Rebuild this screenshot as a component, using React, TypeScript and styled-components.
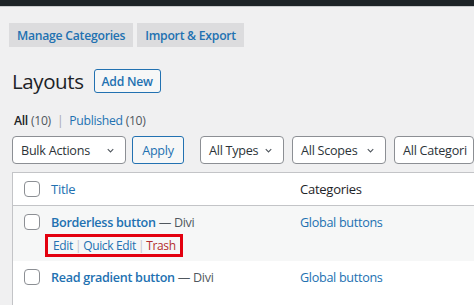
import React from "react";
import styled, { createGlobalStyle } from "styled-components";

const GlobalStyle = createGlobalStyle`
  html, body { margin: 0; padding: 0; }
  body {
    background: #f0f0f1;
    font-family: "Open Sans", "Noto Sans", sans-serif;
    color: #3c434a;
    overflow: hidden;
    width: 474px;
    height: 305px;
  }
`;

const AdminBar = styled.div`
  height: 6px;
  background: #1d2327;
  border-bottom: 1px solid #c9cbcd;
`;

const Page = styled.div`
  padding: 16px 0 0 12px;
  width: 472px;
  box-sizing: border-box;
`;

const Tabs = styled.div`
  display: flex;
  gap: 4px;
  margin-left: -3px;
`;

const Tab = styled.a`
  display: inline-flex;
  align-items: center;
  height: 24px;
  padding: 0 8px;
  background: #dcdcde;
  color: #2271b1;
  font-size: 12.2px;
  font-weight: 600;
  letter-spacing: -0.25px;
`;

const TitleRow = styled.div`
  display: flex;
  align-items: center;
  gap: 10px;
  margin-top: 22px;
`;

const Heading = styled.h1`
  margin: 0;
  font-size: 20.5px;
  line-height: 24px;
  font-weight: 400;
  color: #1d2327;
  letter-spacing: -0.4px;
`;

const OutlineButton = styled.a`
  display: inline-flex;
  align-items: center;
  height: 22px;
  padding: 0 7px;
  border: 1px solid #2271b1;
  border-radius: 3px;
  background: #f6f7f7;
  color: #2271b1;
  font-size: 12.2px;
  font-weight: 600;
  letter-spacing: -0.25px;
`;

const Views = styled.div`
  display: flex;
  align-items: center;
  margin-top: 19px;
  padding-left: 2px;
  font-size: 12.2px;
  letter-spacing: -0.3px;
  color: #50575e;
`;

const ViewLink = styled.span<{ $current?: boolean }>`
  color: ${(p) => (p.$current ? "#1d2327" : "#2271b1")};
  font-weight: ${(p) => (p.$current ? 600 : 400)};
`;

const Count = styled.span`
  color: #50575e;
  margin-left: 3px;
`;

const Sep = styled.span`
  color: #a7aaad;
  margin: 0 6px;
`;

const Filters = styled.div`
  display: flex;
  align-items: center;
  margin-top: 7px;
  white-space: nowrap;
`;

const Select = styled.div<{ $w: number; $gap?: number }>`
  display: flex;
  align-items: center;
  justify-content: space-between;
  flex: none;
  box-sizing: border-box;
  width: ${(p) => p.$w}px;
  height: 28px;
  margin-right: ${(p) => p.$gap ?? 0}px;
  padding: 0 9px 0 8px;
  border: 1px solid #8c8f94;
  border-radius: 4px;
  background: #fff;
  color: #2c3338;
  font-size: 12.6px;
  letter-spacing: -0.25px;
  overflow: hidden;
`;

const ApplyButton = styled.div`
  display: flex;
  align-items: center;
  flex: none;
  box-sizing: border-box;
  width: 52px;
  height: 28px;
  justify-content: center;
  margin-right: 16px;
  border: 1px solid #2271b1;
  border-radius: 3px;
  background: #f6f7f7;
  color: #2271b1;
  font-size: 12.6px;
  letter-spacing: -0.25px;
`;

const Table = styled.div`
  margin-top: 8px;
  border: 1px solid #c3c4c7;
  border-right: none;
  background: #fff;
  width: 470px;
`;

const Row = styled.div<{ $alt?: boolean; $head?: boolean; $h: number }>`
  display: grid;
  grid-template-columns: 38px 249px 1fr;
  align-items: start;
  height: ${(p) => p.$h}px;
  box-sizing: border-box;
  background: ${(p) => (p.$alt ? "#f6f7f7" : "#fff")};
  border-bottom: ${(p) => (p.$head ? "1px solid #c3c4c7" : "none")};
  padding-top: 7px;
`;

const CheckCell = styled.div`
  display: flex;
  justify-content: center;
  padding-right: 1px;
  padding-top: 1px;
`;

const Checkbox = styled.span`
  width: 14px;
  height: 14px;
  border: 1px solid #8c8f94;
  border-radius: 4px;
  background: #fff;
`;

const HeadLink = styled.span`
  color: #2271b1;
  font-size: 13px;
  letter-spacing: -0.25px;
`;

const HeadText = styled.span`
  color: #1d2327;
  font-size: 13px;
  letter-spacing: -0.25px;
`;

const TitleCell = styled.div`
  display: flex;
  flex-direction: column;
  align-items: flex-start;
`;

const RowTitle = styled.div`
  font-size: 12.6px;
  color: #50575e;
  letter-spacing: -0.3px;
  line-height: 19px;
  white-space: nowrap;
`;

const RowTitleLink = styled.span`
  color: #2271b1;
  font-weight: 600;
`;

const Actions = styled.div`
  display: flex;
  align-items: center;
  height: 17px;
  margin: 2px 0 0 -6px;
  padding: 0 4px 0 5px;
  border: 3px solid #e3000f;
  font-size: 12px;
  letter-spacing: -0.35px;
  white-space: nowrap;
`;

const Action = styled.span<{ $danger?: boolean }>`
  color: ${(p) => (p.$danger ? "#b32d2e" : "#2271b1")};
`;

const ActionSep = styled.span`
  color: #c3c4c7;
  margin: 0 2px;
`;

const CatLink = styled.span`
  color: #2271b1;
  font-size: 12.6px;
  letter-spacing: -0.3px;
  line-height: 19px;
`;

const Chevron = () => (
  <svg width="11" height="11" viewBox="0 0 20 20" style={{ flex: "none" }}>
    <path d="M5 7.5 L10 12.5 L15 7.5" fill="none" stroke="#50575e" strokeWidth="2" />
  </svg>
);

export default function App() {
  return (
    <>
      <GlobalStyle />
      <AdminBar />
      <Page>
        <Tabs>
          <Tab>Manage Categories</Tab>
          <Tab>Import &amp; Export</Tab>
        </Tabs>
        <TitleRow>
          <Heading>Layouts</Heading>
          <OutlineButton>Add New</OutlineButton>
        </TitleRow>
        <Views>
          <ViewLink $current>All</ViewLink>
          <Count>(10)</Count>
          <Sep>|</Sep>
          <ViewLink>Published</ViewLink>
          <Count>(10)</Count>
        </Views>
        <Filters>
          <Select $w={114} $gap={6}>
            Bulk Actions <Chevron />
          </Select>
          <ApplyButton>Apply</ApplyButton>
          <Select $w={84} $gap={8}>
            All Types <Chevron />
          </Select>
          <Select $w={94} $gap={8}>
            All Scopes <Chevron />
          </Select>
          <Select $w={80}>All Categori</Select>
        </Filters>
        <Table>
          <Row $head $h={33}>
            <CheckCell>
              <Checkbox />
            </CheckCell>
            <HeadLink>Title</HeadLink>
            <HeadText>Categories</HeadText>
          </Row>
          <Row $alt $h={55}>
            <CheckCell>
              <Checkbox />
            </CheckCell>
            <TitleCell>
              <RowTitle>
                <RowTitleLink>Borderless button</RowTitleLink> — Divi
              </RowTitle>
              <Actions>
                <Action>Edit</Action>
                <ActionSep>|</ActionSep>
                <Action>Quick Edit</Action>
                <ActionSep>|</ActionSep>
                <Action $danger>Trash</Action>
              </Actions>
            </TitleCell>
            <CatLink>Global buttons</CatLink>
          </Row>
          <Row $h={50}>
            <CheckCell>
              <Checkbox />
            </CheckCell>
            <TitleCell>
              <RowTitle>
                <RowTitleLink>Read gradient button</RowTitleLink> — Divi
              </RowTitle>
            </TitleCell>
            <CatLink>Global buttons</CatLink>
          </Row>
        </Table>
      </Page>
    </>
  );
}
